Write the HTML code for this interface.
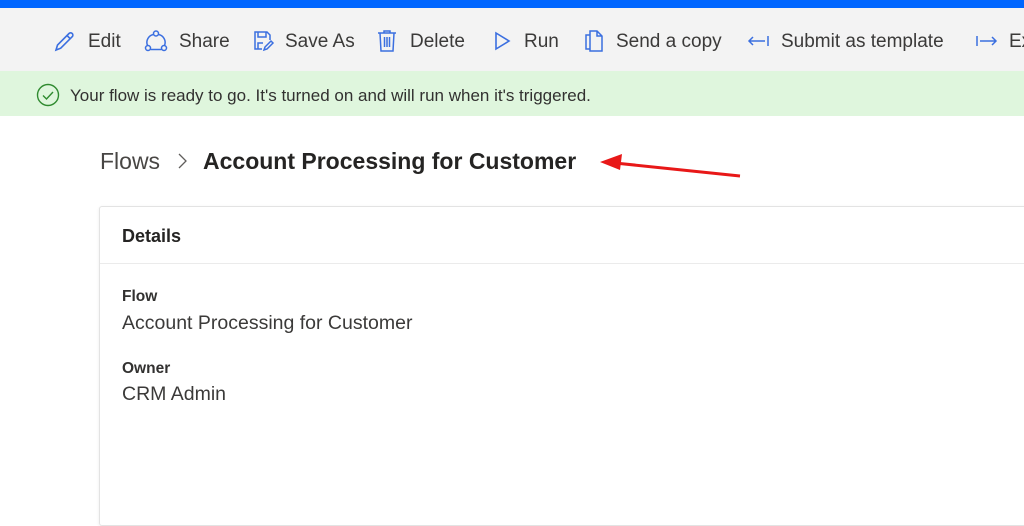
<!DOCTYPE html>
<html><head><meta charset="utf-8"><style>
*{margin:0;padding:0;box-sizing:border-box}
body{width:1024px;height:508px;overflow:hidden;background:#fff;font-family:"Liberation Sans",sans-serif;position:relative;color:#323130}
.top{position:absolute;left:0;top:0;width:1024px;height:8px;background:#0066ff}
.tb{position:absolute;left:0;top:8px;width:1024px;height:63px;background:#f3f3f3}
.it{position:absolute;top:31px;font-size:19px;color:#3b3a39;line-height:22px;white-space:nowrap}
.ic{position:absolute;top:29px}
.gb{position:absolute;left:0;top:71px;width:1024px;height:45px;background:#dff6dd}
.gt{position:absolute;left:70px;top:86px;font-size:17px;color:#323130;white-space:nowrap}
.bc{position:absolute;top:146px;font-size:23px;line-height:30px;white-space:nowrap}
.card{position:absolute;left:99px;top:206px;width:960px;height:320px;border:1px solid #e3e3e3;border-radius:3px;box-shadow:0 1px 3px rgba(0,0,0,.08)}
.hd{position:absolute;left:122px;top:226px;font-size:18px;font-weight:bold;color:#252423}
.dv{position:absolute;left:100px;top:263px;width:924px;height:1px;background:#ebebeb}
.lb{position:absolute;left:122px;font-size:15.5px;font-weight:bold;color:#323130}
.vl{position:absolute;left:122px;font-size:19.5px;color:#3b3a39;white-space:nowrap}
</style></head><body>
<div class="top"></div>
<div class="tb"></div>
<svg class="ic" style="left:53px" width="24" height="24" viewBox="0 0 24 24" fill="none" stroke="#3b6fe0" stroke-width="1.6"><path d="M3 21l1.5-5L16 4.5a2.2 2.2 0 013.2 3.2L7.7 19.2z M14 6.5l3.3 3.3"/></svg>
<div class="it" style="left:88px">Edit</div>
<svg class="ic" style="left:144px" width="24" height="24" viewBox="0 0 24 24" fill="none" stroke="#3b6fe0" stroke-width="1.5"><circle cx="12" cy="4.5" r="2.5"/><circle cx="4" cy="19" r="2.5"/><circle cx="20" cy="19" r="2.5"/><path d="M9.7 5.5A8 8 0 003.5 16.5M14.3 5.5a8 8 0 016.2 11M6.5 20.5h11"/></svg>
<div class="it" style="left:179px">Share</div>
<svg class="ic" style="left:251px" width="24" height="24" viewBox="0 0 24 24" fill="none" stroke="#3b6fe0" stroke-width="1.5"><path d="M11 20H4V3h12l3 3v5M7 3v5h8V3M7 20v-6h5"/><path d="M13 21l1-3 6-6 2 2-6 6z"/></svg>
<div class="it" style="left:285px">Save As</div>
<svg class="ic" style="left:376px" width="22" height="24" viewBox="0 0 22 24" fill="none" stroke="#3b6fe0" stroke-width="1.5"><path d="M2 4h18M8 4V2h6v2M4 4l1 18h12l1-18M8.5 8v10M11 8v10M13.5 8v10"/></svg>
<div class="it" style="left:410px">Delete</div>
<svg class="ic" style="left:494px" width="18" height="24" viewBox="0 0 18 24" fill="none" stroke="#3b6fe0" stroke-width="1.6"><path d="M2 4l13 8-13 8z"/></svg>
<div class="it" style="left:524px">Run</div>
<svg class="ic" style="left:583px" width="22" height="24" viewBox="0 0 22 24" fill="none" stroke="#3b6fe0" stroke-width="1.5"><path d="M7 2h7l5 5v15H7zM14 2v5h5M7 6H3v14h4"/></svg>
<div class="it" style="left:616px">Send a copy</div>
<svg class="ic" style="left:747px" width="24" height="24" viewBox="0 0 24 24" fill="none" stroke="#3b6fe0" stroke-width="1.5"><path d="M2 12h16M6 8l-4 4 4 4M21 7v10"/></svg>
<div class="it" style="left:781px">Submit as template</div>
<svg class="ic" style="left:974px" width="24" height="24" viewBox="0 0 24 24" fill="none" stroke="#3b6fe0" stroke-width="1.5"><path d="M6 12h16M18 8l4 4-4 4M3 7v10"/></svg>
<div class="it" style="left:1009px">Ex</div>
<div class="gb"></div>
<svg style="position:absolute;left:36px;top:83px" width="24" height="24" viewBox="0 0 24 24" fill="none" stroke="#2f8a2f" stroke-width="1.4"><circle cx="12" cy="12" r="10.5"/><path d="M7 12.5l3.5 3.5 6.5-7"/></svg>
<div class="gt">Your flow is ready to go. It's turned on and will run when it's triggered.</div>
<div class="bc" style="left:100px;color:#484644">Flows</div>
<svg style="position:absolute;left:176px;top:151px" width="12" height="20" viewBox="0 0 12 20" fill="none" stroke="#605e5c" stroke-width="1.3"><path d="M3 3l7 7-7 7"/></svg>
<div class="bc" style="left:203px;color:#252423;font-weight:bold">Account Processing for Customer</div>
<svg style="position:absolute;left:595px;top:150px" width="150" height="32" viewBox="595 150 150 32"><path d="M740 176L615 163" stroke="#e81818" stroke-width="3"/><path d="M600 162l22-8-2 16z" fill="#e81818"/></svg>
<div class="card"></div>
<div class="hd">Details</div>
<div class="dv"></div>
<div class="lb" style="top:288px">Flow</div>
<div class="vl" style="top:312px">Account Processing for Customer</div>
<div class="lb" style="top:360px">Owner</div>
<div class="vl" style="top:383px">CRM Admin</div>
</body></html>
